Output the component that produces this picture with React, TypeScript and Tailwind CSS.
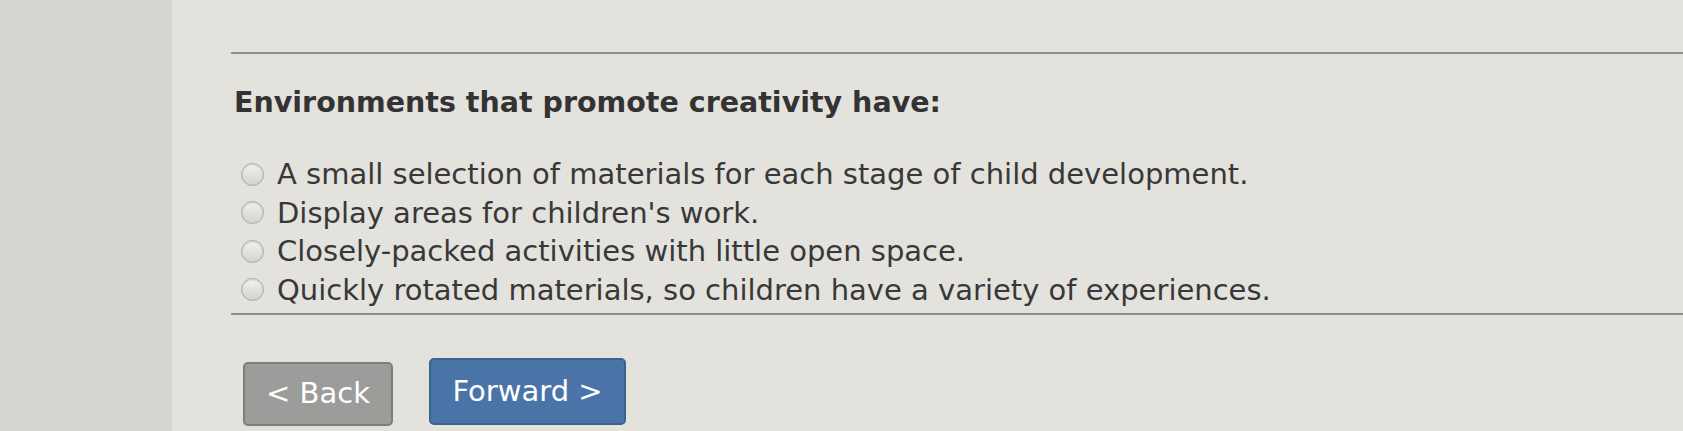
import React from 'react'

const OPTIONS = [
  'A small selection of materials for each stage of child development.',
  "Display areas for children's work.",
  'Closely-packed activities with little open space.',
  'Quickly rotated materials, so children have a variety of experiences.',
]

function Radio() {
  return (
    <span className="inline-block w-[23px] h-[23px] shrink-0 rounded-full border border-[#a9aaa7] bg-gradient-to-b from-[#f2f2ef] to-[#d2d3cf] shadow-[inset_0_1px_2px_rgba(0,0,0,0.15)]" />
  )
}

export default function App() {
  return (
    <div
      className="flex w-[1683px] h-[431px] bg-[#e3e2dd] text-[#383838] overflow-hidden"
      style={{ fontFamily: '"DejaVu Sans", Verdana, sans-serif' }}
    >
      {/* Side strip */}
      <div className="w-[172px] h-full shrink-0 bg-[#d3d5d1]" />

      {/* Question panel */}
      <div className="flex-1 pl-[59px] pt-[52px]">
        <div className="h-[2px] bg-[#8f8f8c]" />

        <h2 className="mt-[33px] ml-[3px] text-[28.5px] leading-[32px] font-bold text-[#333333]">
          Environments that promote creativity have:
        </h2>

        <div className="mt-[36px] flex flex-col">
          {OPTIONS.map((opt) => (
            <label key={opt} className="flex items-center h-[38.5px] gap-[13px] pl-[10px]">
              <Radio />
              <span className="text-[29px] leading-[38px] whitespace-nowrap">{opt}</span>
            </label>
          ))}
        </div>

        <div className="mt-[4px] h-[2px] bg-[#8f8f8c]" />

        <div className="mt-[43px] ml-[12px] flex items-start gap-[36px]">
          <button className="w-[150px] h-[64px] mt-[4px] rounded-[5px] border-2 border-[#7d7d7b] bg-[#9c9c9a] text-white text-[29px]">
            &lt; Back
          </button>
          <button className="w-[197px] h-[67px] rounded-[5px] border-2 border-[#3e628f] bg-[#4a74a8] text-white text-[29px]">
            Forward &gt;
          </button>
        </div>
      </div>
    </div>
  )
}
